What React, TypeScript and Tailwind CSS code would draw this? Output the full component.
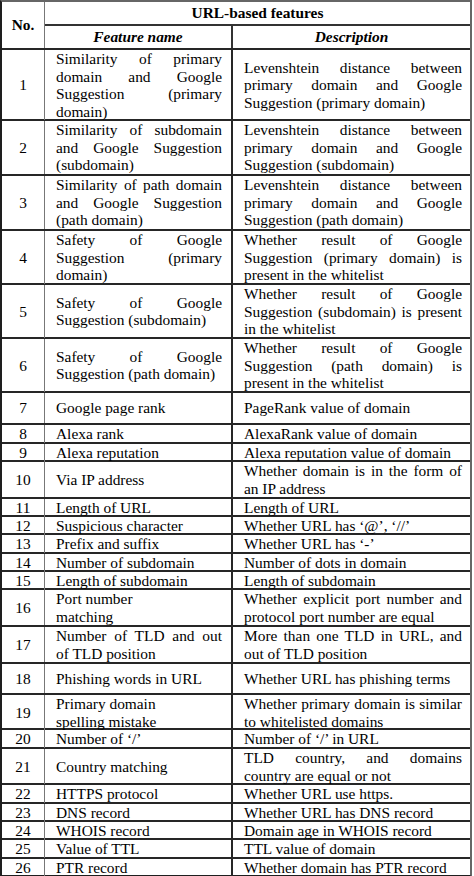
import React from "react";

type Row = {
  n: number;
  h: number;
  f: string[];
  fj?: boolean;
  d: string[];
  dj?: boolean;
};

const rows: Row[] = [
  { n: 1, h: 71, f: ["Similarity of primary", "domain and Google", "Suggestion (primary", "domain)"], d: ["Levenshtein distance between", "primary domain and Google", "Suggestion (primary domain)"] },
  { n: 2, h: 55, f: ["Similarity of subdomain", "and Google Suggestion", "(subdomain)"], d: ["Levenshtein distance between", "primary domain and Google", "Suggestion (subdomain)"] },
  { n: 3, h: 55, f: ["Similarity of path domain", "and Google Suggestion", "(path domain)"], d: ["Levenshtein distance between", "primary domain and Google", "Suggestion (path domain)"] },
  { n: 4, h: 54, f: ["Safety of Google", "Suggestion (primary", "domain)"], d: ["Whether result of Google", "Suggestion (primary domain) is", "present in the whitelist"] },
  { n: 5, h: 54, f: ["Safety of Google", "Suggestion (subdomain)"], d: ["Whether result of Google", "Suggestion (subdomain) is present", "in the whitelist"] },
  { n: 6, h: 54, f: ["Safety of Google", "Suggestion (path domain)"], d: ["Whether result of Google", "Suggestion (path domain) is", "present in the whitelist"] },
  { n: 7, h: 32, f: ["Google page rank"], d: ["PageRank value of domain"] },
  { n: 8, h: 19, f: ["Alexa rank"], d: ["AlexaRank value of domain"] },
  { n: 9, h: 18, f: ["Alexa reputation"], d: ["Alexa reputation value of domain"] },
  { n: 10, h: 37, f: ["Via IP address"], d: ["Whether domain is in the form of", "an IP address"] },
  { n: 11, h: 18, f: ["Length of URL"], d: ["Length of URL"] },
  { n: 12, h: 18, f: ["Suspicious character"], d: ["Whether URL has \u2018@\u2019, \u2018//\u2019"] },
  { n: 13, h: 19, f: ["Prefix and suffix"], d: ["Whether URL has \u2018-\u2019"] },
  { n: 14, h: 18, f: ["Number of subdomain"], d: ["Number of dots in domain"] },
  { n: 15, h: 18, f: ["Length of subdomain"], d: ["Length of subdomain"] },
  { n: 16, h: 37, f: ["Port number", "matching"], fj: false, d: ["Whether explicit port number and", "protocol port number are equal"] },
  { n: 17, h: 37, f: ["Number of TLD and out", "of TLD position"], d: ["More than one TLD in URL, and", "out of TLD position"] },
  { n: 18, h: 31, f: ["Phishing words in URL"], d: ["Whether URL has phishing terms"] },
  { n: 19, h: 35, f: ["Primary domain", "spelling mistake"], fj: false, d: ["Whether primary domain is similar", "to whitelisted domains"] },
  { n: 20, h: 19, f: ["Number of \u2018/\u2019"], d: ["Number of \u2018/\u2019 in URL"] },
  { n: 21, h: 36, f: ["Country matching"], d: ["TLD country, and domains", "country are equal or not"] },
  { n: 22, h: 19, f: ["HTTPS protocol"], d: ["Whether URL use https."] },
  { n: 23, h: 18, f: ["DNS record"], d: ["Whether URL has DNS record"] },
  { n: 24, h: 18, f: ["WHOIS record"], d: ["Domain age in WHOIS record"] },
  { n: 25, h: 19, f: ["Value of TTL"], d: ["TTL value of domain"] },
  { n: 26, h: 18, f: ["PTR record"], d: ["Whether domain has PTR record"] },
];

function Lines({ lines, justify = true }: { lines: string[]; justify?: boolean }) {
  return (
    <>
      {lines.map((l, i) => {
        const j = justify && i < lines.length - 1;
        return (
          <div
            key={i}
            className={
              j
                ? "whitespace-nowrap text-justify [text-align-last:justify]"
                : "whitespace-nowrap text-left"
            }
          >
            {l}
          </div>
        );
      })}
    </>
  );
}

export default function App() {
  return (
    <div className="bg-white w-[474px] h-[876px] overflow-hidden">
      <div className="w-[472px] border-2 border-[#1e1e1e] border-t-[#666] border-r-[#666] font-['Liberation_Serif','Times_New_Roman',serif] text-[15.4px] leading-[17.5px] text-black">
        <div className="grid grid-cols-[43px_188px_237px] grid-rows-[22px_24px]">
          <div className="row-span-2 flex items-center justify-center border-r border-[#777] font-bold">
            No.
          </div>
          <div className="col-span-2 flex items-center justify-center font-bold">
            URL-based features
          </div>
          <div className="flex items-center justify-center border-t-2 border-[#333] border-r-2 font-bold italic">
            Feature name
          </div>
          <div className="flex items-center justify-center border-t-2 border-[#333] font-bold italic">
            Description
          </div>
        </div>
        {rows.map((r) => (
          <div
            key={r.n}
            className="grid grid-cols-[43px_188px_237px] border-t-2 border-[#262626]"
            style={{ height: r.h }}
          >
            <div className="flex items-center justify-center border-r border-[#777]">
              {r.n}
            </div>
            <div className="flex flex-col justify-center pl-[11px] pr-[9px] border-r-2 border-[#262626]">
              <Lines lines={r.f} justify={r.fj !== false} />
            </div>
            <div className="flex flex-col justify-center pl-[11px] pr-[8px]">
              <Lines lines={r.d} justify={r.dj !== false} />
            </div>
          </div>
        ))}
      </div>
    </div>
  );
}
